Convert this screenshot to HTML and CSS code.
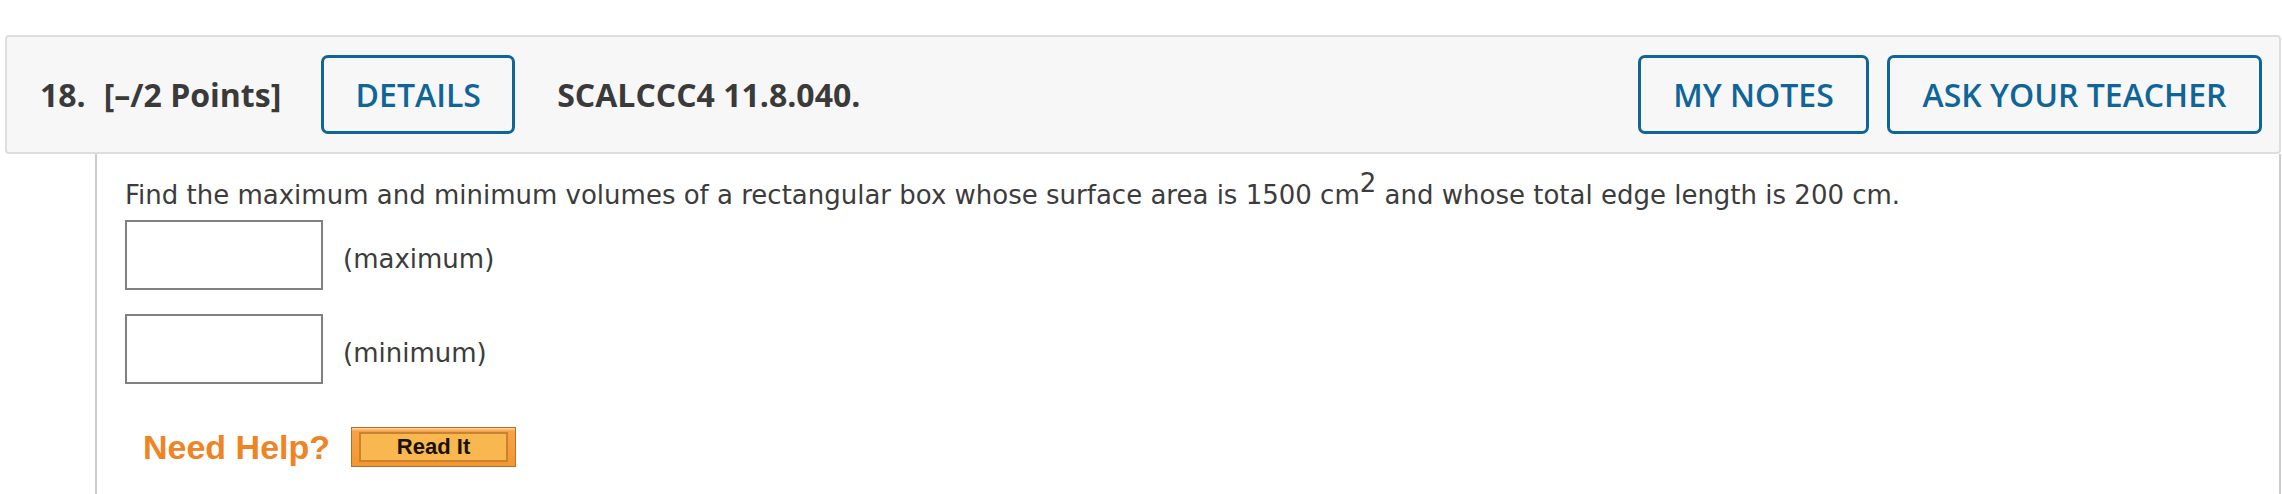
FILE: index.html
```html
<!DOCTYPE html>
<html lang="en">
<head>
<meta charset="utf-8">
<title>Question 18</title>
<link rel="stylesheet" href="styles.css">
</head>
<body>
<div class="page">
  <div class="qhead">
    <span class="qnum">18.</span>
    <span class="qpts">[–/2 Points]</span>
    <button class="btn btn-details">DETAILS</button>
    <span class="qref">SCALCCC4 11.8.040.</span>
    <div class="head-actions">
      <button class="btn btn-notes">MY NOTES</button>
      <button class="btn btn-ask">ASK YOUR TEACHER</button>
    </div>
  </div>
  <div class="qbody">
    <p class="qtext">Find the maximum and minimum volumes of a rectangular box whose surface area is 1500 cm<span class="sup">2</span> and whose total edge length is 200 cm.</p>
    <div class="answer-row">
      <input class="answer" type="text">
      <span class="answer-label">(maximum)</span>
    </div>
    <div class="answer-row">
      <input class="answer" type="text">
      <span class="answer-label">(minimum)</span>
    </div>
    <div class="help-row">
      <span class="need-help">Need Help?</span>
      <span class="read-it"><span class="read-it-inner">Read It</span></span>
    </div>
  </div>
</div>
</body>
</html>
```

FILE: styles.css
```css
html, body {
  margin: 0;
  padding: 0;
  background: #ffffff;
}

.page {
  padding: 35px 1px 0 5px;
}

.qhead {
  display: flex;
  align-items: center;
  box-sizing: border-box;
  height: 119px;
  padding: 0 17px 0 33px;
  background: #f7f7f7;
  border: 2px solid #dedede;
  border-radius: 4px;
  font-family: "Open Sans", "Noto Sans", sans-serif;
  color: #3a3a3a;
}

.qnum {
  font-weight: 700;
  font-size: 32px;
}

.qpts {
  font-weight: 700;
  font-size: 32px;
  margin-left: 18px;
}

.qref {
  font-weight: 700;
  font-size: 32px;
  margin-left: 42px;
}

.btn {
  box-sizing: border-box;
  height: 79px;
  padding: 0 30px;
  background: transparent;
  border: 3px solid #0f6597;
  border-radius: 7px;
  color: #0f6597;
  font-family: "Open Sans", "Noto Sans", sans-serif;
  font-weight: 600;
  font-size: 32px;
  cursor: pointer;
}

.btn-details {
  width: 194px;
  margin-left: 40px;
}

.head-actions {
  display: flex;
  gap: 18px;
  margin-left: auto;
}

.btn-notes {
  width: 231px;
}

.btn-ask {
  width: 375px;
}

.qbody {
  margin-left: 90px;
  border-left: 2px solid #cccccc;
  border-right: 2px solid #cccccc;
  padding: 26px 0 40px 28px;
  font-family: Verdana, "DejaVu Sans", sans-serif;
  font-size: 26px;
  color: #3c3c3c;
}

.qtext {
  margin: 0;
  line-height: 30px;
}

.sup {
  vertical-align: 12px;
  line-height: 0;
}

.answer-row {
  display: flex;
  align-items: flex-start;
  margin-top: 10px;
}

.answer-row + .answer-row {
  margin-top: 24px;
}

.answer {
  box-sizing: border-box;
  width: 198px;
  height: 70px;
  margin: 0;
  border: 2px solid #808080;
  background: #ffffff;
  font-size: 26px;
}

.answer-label {
  margin-left: 20px;
  padding-top: 24px;
  line-height: 30px;
}

.help-row {
  display: flex;
  align-items: center;
  margin-top: 43px;
  padding-left: 18px;
}

.need-help {
  font-family: "Liberation Sans", Arial, sans-serif;
  font-weight: 700;
  font-size: 34px;
  line-height: 38px;
  color: #ee8424;
}

.read-it {
  display: flex;
  box-sizing: border-box;
  width: 165px;
  height: 40px;
  margin-left: 21px;
  padding: 4px 7px;
  border: 1px solid #b0712d;
  background: linear-gradient(#fcd9a6 0, #f7a346 3px, #f5962f 100%);
}

.read-it-inner {
  flex: 1;
  display: flex;
  align-items: center;
  justify-content: center;
  border: 2px solid #c98232;
  background: #f9b84f;
  font-family: "Liberation Sans", Arial, sans-serif;
  font-weight: 700;
  font-size: 22px;
  color: #1a1208;
}
```
